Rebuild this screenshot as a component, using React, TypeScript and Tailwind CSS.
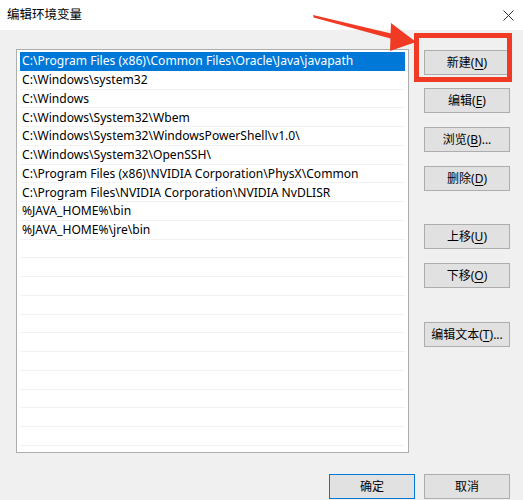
import React from 'react'

const paths = [
    'C:\\Program Files (x86)\\Common Files\\Oracle\\Java\\javapath',
    'C:\\Windows\\system32',
    'C:\\Windows',
    'C:\\Windows\\System32\\Wbem',
    'C:\\Windows\\System32\\WindowsPowerShell\\v1.0\\',
    'C:\\Windows\\System32\\OpenSSH\\',
    'C:\\Program Files (x86)\\NVIDIA Corporation\\PhysX\\Common',
    'C:\\Program Files\\NVIDIA Corporation\\NVIDIA NvDLISR',
    '%JAVA_HOME%\\bin',
    '%JAVA_HOME%\\jre\\bin',
]

const font = { fontFamily: '"Noto Sans", "Noto Sans CJK SC", sans-serif' }

function Btn({ label, hot, tail = '', primary = false }: { label: string; hot?: string; tail?: string; primary?: boolean }) {
    return (
        <button
            className={
                'w-[86px] h-[25px] bg-[#e1e1e1] text-[12px] text-black leading-none flex items-center justify-center border ' +
                (primary ? 'border-[#0078d7]' : 'border-[#adadad]')
            }
        >
            {label}
            {hot && (
                <>
                    (<span className="underline underline-offset-2">{hot}</span>){tail}
                </>
            )}
        </button>
    )
}

export default function App() {
    const rows = Array.from({ length: 22 }, (_, i) => paths[i] ?? '')

    return (
        <div className="relative w-[523px] h-[500px] bg-[#f0f0f0] overflow-hidden" style={font}>
            {/* title bar */}
            <div className="h-[30px] bg-white flex items-center justify-between pl-[7px] pr-[9px]">
                <span className="text-[12.5px] text-black">编辑环境变量</span>
                <svg width="11" height="11" viewBox="0 0 11 11">
                    <path d="M0.5 0.5 L10.5 10.5 M10.5 0.5 L0.5 10.5" stroke="#333" strokeWidth="1" />
                </svg>
            </div>

            <div className="flex pl-[16px] pt-[19px]">
                {/* path list */}
                <div className="w-[393px] h-[404px] bg-white border border-[#adadad] px-[3px] pt-[2px] overflow-hidden">
                    {rows.map((p, i) => (
                        <div
                            key={i}
                            className={
                                'h-[18.75px] flex items-center pl-[2px] pt-[1px] text-[12.1px] whitespace-nowrap border-b ' +
                                (i === 0 ? 'bg-[#0078d7] text-white border-[#0078d7]' : 'text-black border-[#f2f2f2]')
                            }
                        >
                            {p}
                        </div>
                    ))}
                </div>

                {/* action buttons */}
                <div className="ml-[15px] pt-[1px] flex flex-col">
                    <Btn label="新建" hot="N" />
                    <div className="h-[13px]" />
                    <Btn label="编辑" hot="E" />
                    <div className="h-[14px]" />
                    <Btn label="浏览" hot="B" tail="..." />
                    <div className="h-[14px]" />
                    <Btn label="删除" hot="D" />
                    <div className="h-[33px]" />
                    <Btn label="上移" hot="U" />
                    <div className="h-[14px]" />
                    <Btn label="下移" hot="O" />
                    <div className="h-[34px]" />
                    <Btn label="编辑文本" hot="T" tail="..." />
                </div>
            </div>

            <div className="flex justify-end gap-[9px] pr-[13px] pt-[21px]">
                <Btn label="确定" primary />
                <Btn label="取消" />
            </div>

            {/* red annotation */}
            <div className="absolute left-[414px] top-[33px] w-[98px] h-[49px] border-[5px] border-[#f03a24]" />
            <svg className="absolute left-0 top-0" width="523" height="60" viewBox="0 0 523 60">
                <path d="M313 15 L313.6 17.5 L396 40 L397.5 35 Z" fill="#f03a24" />
                <path d="M391 23 L416 42 L390 51 Z" fill="#f03a24" />
            </svg>
        </div>
    )
}
